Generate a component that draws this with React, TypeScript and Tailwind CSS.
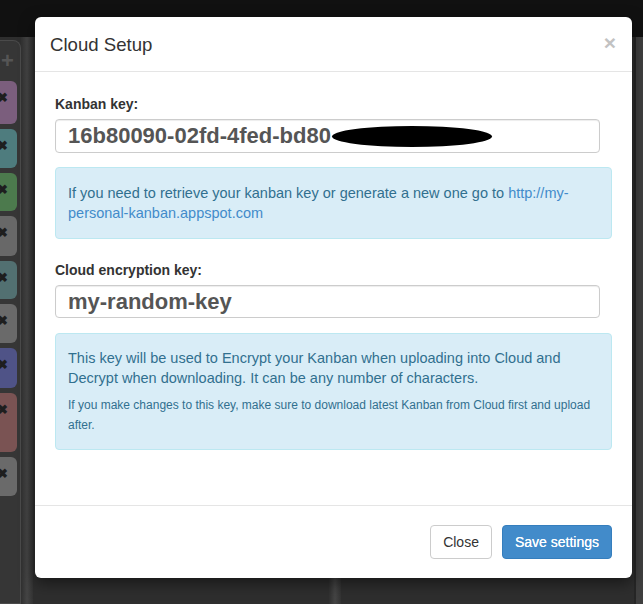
const tiles = [
  { color: "bg-[#7b5e7d]", h: "h-[43px]" },
  { color: "bg-[#4e7c7e]", h: "h-[39px]" },
  { color: "bg-[#4c7a4d]", h: "h-[38px]" },
  { color: "bg-[#686868]", h: "h-[40px]" },
  { color: "bg-[#527071]", h: "h-[38px]" },
  { color: "bg-[#6a6a6a]", h: "h-[39px]" },
  { color: "bg-[#4f5387]", h: "h-[40px]" },
  { color: "bg-[#7a5353]", h: "h-[59px]" },
  { color: "bg-[#6a6a6a]", h: "h-[39px]" },
];

function Divider() {
  return (
    <div className="w-[12px] shrink-0 self-stretch bg-gradient-to-r from-[#303030] via-[#454545] to-[#333333]" />
  );
}

function Board() {
  return (
    <div className="flex h-full flex-col">
      <div className="h-[37px] shrink-0 bg-[#111111]" />
      <div className="flex flex-1">
        <div className="w-[21px] shrink-0 pt-[3px]">
          <div className="flex h-full flex-col rounded-tr-[8px] border border-l-0 border-[#4a4a4a] bg-[#363636]">
            <div className="flex h-[40px] items-center pl-[1px] text-[22px] font-bold leading-none text-[#555]">
              +
            </div>
            <div className="flex flex-col gap-[5px]">
              {tiles.map((t, i) => (
                <div
                  key={i}
                  className={`${t.color} ${t.h} flex w-[17px] items-start rounded-r-[6px] pt-[10px]`}
                >
                  <span className="-ml-[3px] text-[13px] font-bold leading-none text-[#1e1e1e]">✖</span>
                </div>
              ))}
            </div>
          </div>
        </div>
        <Divider />
        <div className="w-[296px] shrink-0 bg-[#2e2e2e]" />
        <Divider />
        <div className="w-[293px] shrink-0 bg-[#2e2e2e]" />
        <div className="w-[2px] shrink-0 bg-[#262626]" />
        <div className="flex-1 bg-[#3f3f3f]" />
      </div>
    </div>
  );
}

export default function App() {
  return (
    <div
      className="relative h-[604px] w-[643px] overflow-hidden bg-[#2e2e2e]"
      style={{ fontFamily: '"Liberation Sans", Arial, sans-serif' }}
    >
      <Board />

      <div className="absolute left-[35px] top-[17px] flex h-[561px] w-[597px] flex-col rounded-[6px] bg-white shadow-[0_5px_15px_rgba(0,0,0,0.5)]">
        <div className="flex h-[55px] items-center justify-between border-b border-[#e5e5e5] px-[15px]">
          <h4 className="text-[18.6px] leading-[25px] text-[#333]">Cloud Setup</h4>
          <span className="mr-[1px] pb-[3px] text-[21px] font-bold leading-none text-[#c2c2c2]">×</span>
        </div>

        <div className="flex-1 px-[20px] pt-[22px]">
          <label className="block text-[14px] font-bold leading-[20px] text-[#333]">Kanban key:</label>
          <div className="mt-[5px] flex h-[34px] w-[545px] items-center rounded-[4px] border border-[#cccccc] px-[12px] shadow-[inset_0_1px_1px_rgba(0,0,0,0.075)]">
            <span className="text-[22px] font-bold leading-none text-[#555]">16b80090-02fd-4fed-bd80</span>
            <span className="ml-[1px] inline-block h-[21px] w-[160px] rounded-[50%] bg-black" />
          </div>

          <div className="mt-[14px] rounded-[4px] border border-[#bce8f1] bg-[#d9edf7] px-[12px] py-[15px] text-[14.5px] leading-[20px] text-[#31708f]">
            If you need to retrieve your kanban key or generate a new one go to{" "}
            <a className="text-[#428bca]">http://my-personal-kanban.appspot.com</a>
          </div>

          <label className="mt-[21px] block text-[14px] font-bold leading-[20px] text-[#333]">
            Cloud encryption key:
          </label>
          <div className="mt-[5px] flex h-[33px] w-[545px] items-center rounded-[4px] border border-[#cccccc] px-[12px] shadow-[inset_0_1px_1px_rgba(0,0,0,0.075)]">
            <span className="text-[22px] font-bold leading-none text-[#555]">my-random-key</span>
          </div>

          <div className="mt-[15px] rounded-[4px] border border-[#bce8f1] bg-[#d9edf7] px-[12px] py-[14px] text-[#31708f]">
            <p className="text-[14.5px] leading-[20px]">
              This key will be used to Encrypt your Kanban when uploading into Cloud and Decrypt when downloading. It can
              be any number of characters.
            </p>
            <p className="mt-[7px] text-[12px] leading-[20px]">
              If you make changes to this key, make sure to download latest Kanban from Cloud first and upload after.
            </p>
          </div>
        </div>

        <div className="flex h-[73px] items-center justify-end gap-[10px] border-t border-[#e5e5e5] px-[20px]">
          <button className="h-[34px] rounded-[4px] border border-[#cccccc] bg-white px-[12px] text-[14px] text-[#333]">
            Close
          </button>
          <button className="h-[34px] rounded-[4px] border border-[#357ebd] bg-[#428bca] px-[12px] text-[14px] text-white [text-shadow:0_0_0.6px_#fff]">
            Save settings
          </button>
        </div>
      </div>
    </div>
  );
}
